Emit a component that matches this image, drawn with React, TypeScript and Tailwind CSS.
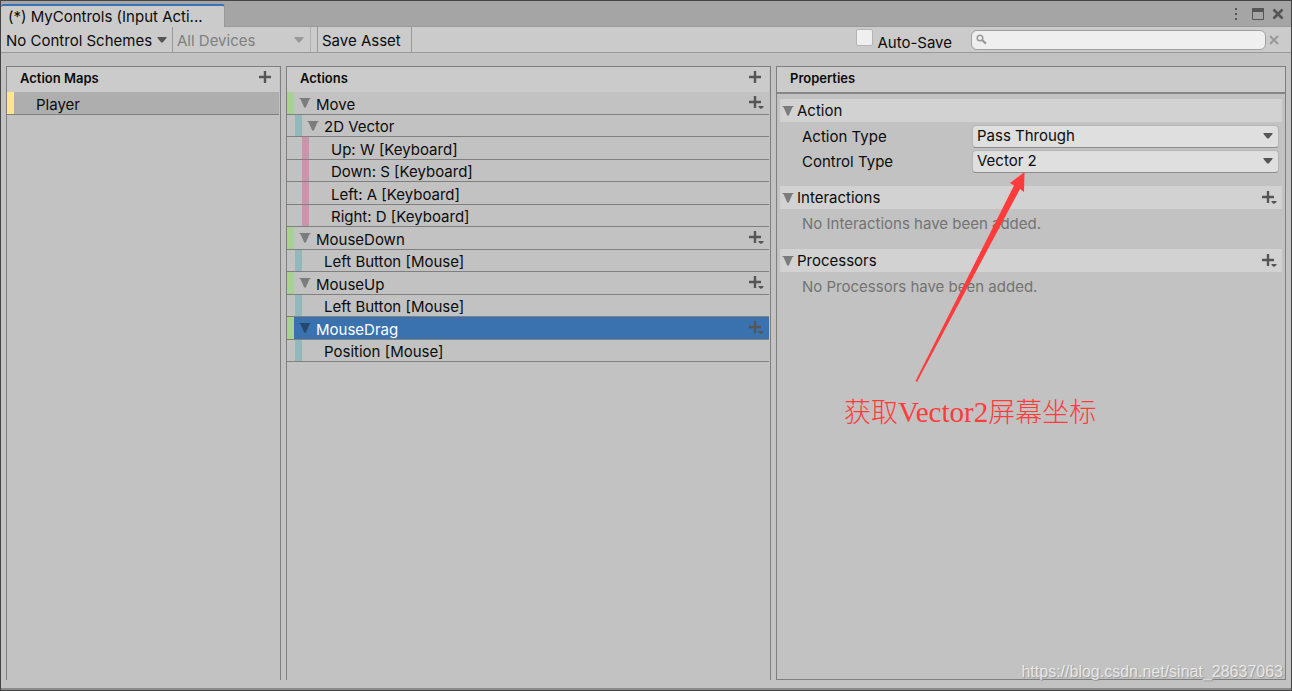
import type { ReactNode } from 'react';
import clsx from 'clsx';

type Kind = 'action' | 'binding' | 'part';

interface TreeRow {
    label: string;
    kind: Kind;
    foldout?: boolean;
    selected?: boolean;
}

const ROWS: TreeRow[] = [
    { label: 'Move', kind: 'action', foldout: true },
    { label: '2D Vector', kind: 'binding', foldout: true },
    { label: 'Up: W [Keyboard]', kind: 'part' },
    { label: 'Down: S [Keyboard]', kind: 'part' },
    { label: 'Left: A [Keyboard]', kind: 'part' },
    { label: 'Right: D [Keyboard]', kind: 'part' },
    { label: 'MouseDown', kind: 'action', foldout: true },
    { label: 'Left Button [Mouse]', kind: 'binding' },
    { label: 'MouseUp', kind: 'action', foldout: true },
    { label: 'Left Button [Mouse]', kind: 'binding' },
    { label: 'MouseDrag', kind: 'action', foldout: true, selected: true },
    { label: 'Position [Mouse]', kind: 'binding' },
];

const KIND_INDENT: Record<Kind, string> = {
    action: 'pl-0',
    binding: 'pl-2',
    part: 'pl-[15px]',
};

const KIND_COLOR: Record<Kind, string> = {
    action: 'bg-[#a8d196]',
    binding: 'bg-[#93b8b9]',
    part: 'bg-[#c994ae]',
};

function PlusIcon({ menu = false }: { menu?: boolean }) {
    return (
        <svg width="16" height="16" viewBox="0 0 16 16" fill="#555">
            <path d="M5.8 1h2.4v4.8H13v2.4H8.2V13H5.8V8.2H1V5.8h4.8z" />
            {menu && <path d="M10.5 11h5v1L13.5 13.8h-1L10.5 12z" />}
        </svg>
    );
}

function Foldout({ className }: { className?: string }) {
    return (
        <svg width="12" height="10" viewBox="0 0 12 10" className={className}>
            <path d="M0.5 0h11v1h-1L6.8 9.5H5.2L1.5 1h-1z" fill="currentColor" />
        </svg>
    );
}

function DownArrow({ className }: { className?: string }) {
    return (
        <svg width="10" height="6" viewBox="0 0 10 6" className={className}>
            <path d="M0.5 0h9v1L5.7 5.5H4.3L0.5 1z" fill="currentColor" />
        </svg>
    );
}

function TitleBar() {
    return (
        <div className="flex h-[26px] shrink-0 items-end justify-between border-b border-[#999] bg-[#a5a5a5]">
            <div className="-mb-px flex h-[23px] w-[224px] items-center rounded-t-[3px] border-t-2 border-r border-t-[#3a72b8] border-r-[#999] bg-[#cbcbcb] pl-[7px] whitespace-nowrap">
                (*) MyControls (Input Acti...
            </div>
            <div className="flex h-full items-center gap-1 pr-[6px] text-[#555]">
                <button aria-label="Menu">
                    <svg width="16" height="14" viewBox="0 0 16 14" fill="currentColor">
                        <path d="M7 1h2v2H7zM7 6h2v2H7zM7 11h2v2H7z" />
                    </svg>
                </button>
                <button aria-label="Maximize" className="ml-[3px]">
                    <svg width="14" height="14" viewBox="0 0 14 14">
                        <path d="M1.5 1.5h11v11h-11z" fill="none" stroke="currentColor" />
                        <path d="M1 1h12v4H1z" fill="currentColor" />
                    </svg>
                </button>
                <button aria-label="Close" className="ml-[2px]">
                    <svg width="14" height="14" viewBox="0 0 14 14">
                        <path d="M2.5 2.5l9 9m0-9l-9 9" stroke="currentColor" strokeWidth="2.6" />
                    </svg>
                </button>
            </div>
        </div>
    );
}

function Toolbar() {
    return (
        <div className="flex h-[26px] shrink-0 items-center border-b border-[#999] bg-[#cbcbcb] whitespace-nowrap">
            <button className="flex h-full w-[172px] items-center justify-between border-r border-[#999] pr-[5px] pl-[5px]">
                <span className="pt-[2px]">No Control Schemes</span>
                <DownArrow className="text-[#555]" />
            </button>
            <button disabled className="flex h-full w-[138px] items-center justify-between border-r border-[#b0b0b0] pr-[6px] pl-1 text-[#808080]">
                <span className="pt-[2px]">All Devices</span>
                <DownArrow className="text-[#999]" />
            </button>
            <button className="ml-[6px] h-full w-[95px] border-x border-[#999] pt-[2px] pl-1 text-left">Save Asset</button>

            <label className="ml-auto flex h-full items-start gap-1">
                <input
                    type="checkbox"
                    className="mt-[2px] size-[17px] appearance-none rounded-[2px] border border-[#b4b4b4] bg-[#efefef]"
                />
                <span className="mt-1 leading-[23px]">Auto-Save</span>
            </label>
            <div className="relative ml-[19px] flex items-center">
                <svg width="12" height="12" viewBox="0 0 12 12" className="absolute left-[5px] text-[#999]">
                    <circle cx="4" cy="4" r="2.8" fill="none" stroke="currentColor" strokeWidth="1.5" />
                    <path d="M6 6l4 3.6" stroke="currentColor" strokeWidth="2.2" />
                </svg>
                <input
                    type="text"
                    aria-label="Search"
                    className="h-5 w-[295px] rounded-[6px] border border-[#a0a0a0] bg-[#efefef] pl-5 outline-none"
                />
            </div>
            <button aria-label="Clear search" className="mr-3 ml-[3px]">
                <svg width="10" height="10" viewBox="0 0 10 10">
                    <path d="M1 1l8 8m0-8l-8 8" stroke="#999" strokeWidth="2" />
                </svg>
            </button>
        </div>
    );
}

function PanelHeader({ title, add }: { title: string; add?: boolean }) {
    return (
        <div className="flex h-[25px] items-center justify-between bg-[#cbcbcb] pr-[5px] pb-[3px] pl-[13px]">
            <h2 className="text-[13px] font-semibold">{title}</h2>
            {add && (
                <button aria-label={`Add to ${title}`}>
                    <PlusIcon />
                </button>
            )}
        </div>
    );
}

function ActionRow({ row }: { row: TreeRow }) {
    return (
        <li
            className={clsx(
                'flex h-[23px] border-b border-[#7f7f7f] even:h-[22px]',
                KIND_INDENT[row.kind],
                row.selected && 'bg-[#3a72b0] text-white',
            )}
        >
            <span className={clsx('w-[7px]', KIND_COLOR[row.kind])} />
            <span className="flex w-[22px] justify-center pt-[6px]">
                {row.foldout && <Foldout className={row.selected ? 'text-[#24486c]' : 'text-[#7c7c7c]'} />}
            </span>
            <span className="flex-1 self-center pt-[3px]">{row.label}</span>
            {row.kind === 'action' && (
                <button aria-label={`Add binding to ${row.label}`} className="mr-[5px]">
                    <PlusIcon menu />
                </button>
            )}
        </li>
    );
}

function Section({ title, add, children }: { title: string; add?: boolean; children: ReactNode }) {
    return (
        <section className="mb-[14px]">
            <div className="flex h-[23px] items-center bg-[#d2d2d2] pr-[5px] pl-[2px]">
                <Foldout className="mr-[3px] text-[#7c7c7c]" />
                <h3 className="flex-1 pt-px">{title}</h3>
                {add && (
                    <button aria-label={`Add ${title}`}>
                        <PlusIcon menu />
                    </button>
                )}
            </div>
            <div className="pt-[3px] pr-[3px] pl-[22px]">{children}</div>
        </section>
    );
}

function SelectField({ id, label, value }: { id: string; label: string; value: string }) {
    return (
        <div className="mb-[3px] flex h-[22px] items-center last:mb-0">
            <label htmlFor={id} className="w-[170px] pt-[2px]">
                {label}
            </label>
            <div className="relative flex flex-1 items-center">
                <select
                    id={id}
                    className="h-[23px] w-full appearance-none rounded-[4px] border border-[#b4b4b4] border-b-[#8c8c8c] bg-[#dfdfdf] pb-px pl-1 outline-none"
                >
                    <option>{value}</option>
                </select>
                <DownArrow className="pointer-events-none absolute right-[6px] text-[#555]" />
            </div>
        </div>
    );
}

// Red arrow with its note, laid over the properties panel
function Annotation() {
    return (
        <div className="pointer-events-none absolute top-[105px] left-[67px] text-[#ff3b3b]">
            <svg width="112" height="212" viewBox="0 0 112 212" className="ml-[71px]">
                <path d="M109.5 0L95 11l4 2.5L0.5 209l1.5 1L105 17l4 3z" fill="currentColor" />
            </svg>
            <p className="mt-[10px] font-['Liberation_Serif','Noto_Sans_CJK_SC',serif] text-[27px] leading-[36px] font-light whitespace-nowrap">
                获取<span className="text-[29px]">Vector2</span>屏幕坐标
            </p>
        </div>
    );
}

export default function App() {
    return (
        <div className="relative flex h-screen flex-col border border-[#444] bg-[#c2c2c2] font-['Inter',sans-serif] text-[15px] leading-[20px] text-[#0c0c0c]">
            <TitleBar />
            <Toolbar />

            <main className="grid min-h-0 flex-1 grid-cols-[275px_485fr_510fr] gap-[5px] border-b-2 border-[#8a8a8a] px-[5px] pt-[13px] pb-2">
                <div className="border-x border-t border-[#7f7f7f] pr-px">
                    <PanelHeader title="Action Maps" add />
                    <ul>
                        <li className="flex h-[23px] border-b border-[#7f7f7f] bg-[#aeaeae]">
                            <span className="w-[7px] bg-[#ffe58f]" />
                            <span className="self-center pt-[3px] pl-[22px]">Player</span>
                        </li>
                    </ul>
                </div>

                <div className="border-x border-t border-[#7f7f7f] pr-px">
                    <PanelHeader title="Actions" add />
                    <ul>
                        {ROWS.map((row, i) => (
                            <ActionRow key={i} row={row} />
                        ))}
                    </ul>
                </div>

                <div className="relative border border-[#7f7f7f]">
                    <PanelHeader title="Properties" />
                    <div className="border-t-2 border-[#868686] px-[3px] pt-[5px]">
                        <Section title="Action">
                            <SelectField id="action-type" label="Action Type" value="Pass Through" />
                            <SelectField id="control-type" label="Control Type" value="Vector 2" />
                        </Section>
                        <Section title="Interactions" add>
                            <p className="leading-[23px] text-[#737373]">No Interactions have been added.</p>
                        </Section>
                        <Section title="Processors" add>
                            <p className="leading-[23px] text-[#737373]">No Processors have been added.</p>
                        </Section>
                    </div>
                    <Annotation />
                </div>
            </main>

            <span className="absolute right-2 bottom-2 font-['Liberation_Sans',sans-serif] text-[16px] text-white/70 [text-shadow:1px_1px_1px_#999]">
                https://blog.csdn.net/sinat_28637063
            </span>
        </div>
    );
}
